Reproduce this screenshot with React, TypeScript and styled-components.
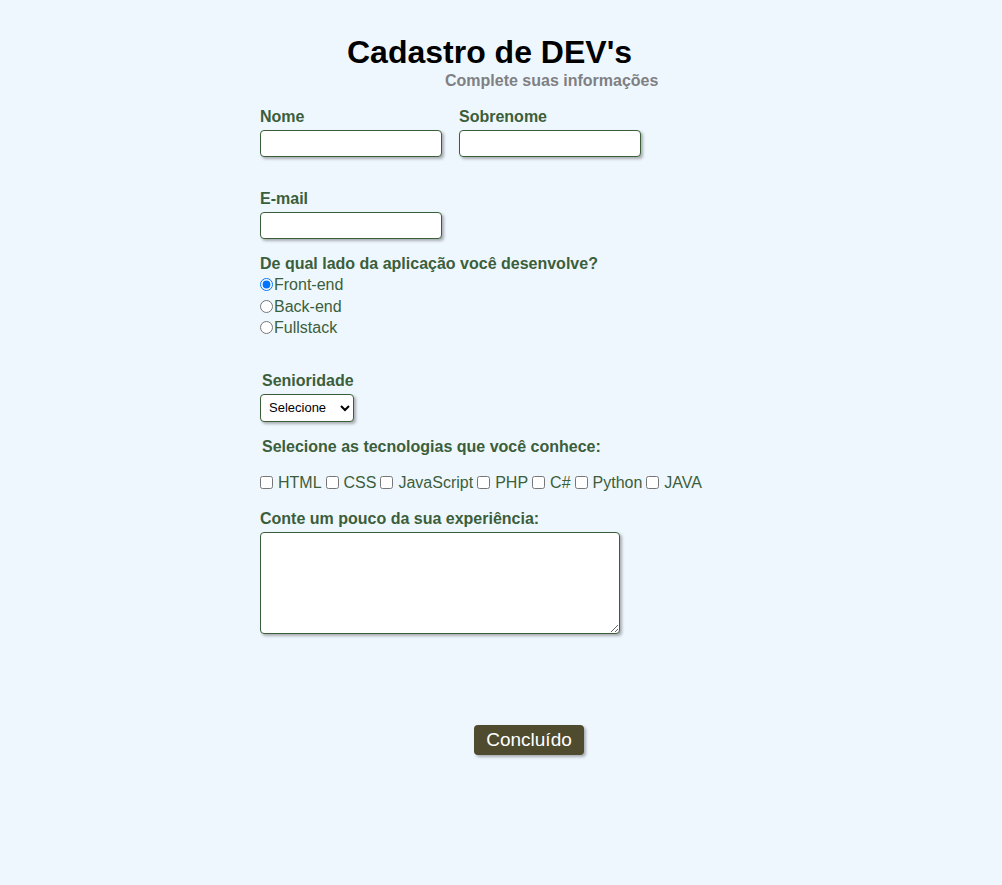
import React from "react";
import styled, { createGlobalStyle } from "styled-components";

const Global = createGlobalStyle`
  html, body { margin: 0; padding: 0; background: #eff7fe; }
  body { font-family: "Liberation Sans", Arial, sans-serif; min-height: 885px; }
`;

const Page = styled.div`
  width: 1002px;
  min-height: 885px;
  background: #eff7fe;
  padding-top: 34px;
  box-sizing: border-box;
`;

const Form = styled.form`
  margin-left: 260px;
  width: 456px;
  display: flex;
  flex-direction: column;
  color: #3b5e3b;
`;

const Header = styled.header`
  display: flex;
  flex-direction: column;
`;

const Title = styled.h1`
  margin: 0;
  font-size: 32px;
  line-height: 37px;
  font-weight: bold;
  color: #000;
  padding-left: 87px;
`;

const Subtitle = styled.p`
  margin: 1px 0 0;
  font-size: 16px;
  line-height: 18px;
  font-weight: bold;
  color: #7f8083;
  padding-left: 185px;
`;

const Row = styled.div<{ $mt: number }>`
  display: flex;
  gap: 17px;
  margin-top: ${(p) => p.$mt}px;
`;

const Field = styled.div`
  display: flex;
  flex-direction: column;
`;

const Label = styled.label`
  font-size: 16px;
  font-weight: bold;
  line-height: 20px;
  margin-bottom: 3px;
  color: #3b5e3b;
`;

const Input = styled.input`
  width: 182px;
  height: 27px;
  box-sizing: border-box;
  border: 1px solid #3b5e3b;
  border-radius: 4px;
  background: #fff;
  box-shadow: 2px 2px 3px rgba(0, 0, 0, 0.3);
  outline: none;
  padding: 0 4px;
`;

const Section = styled.div<{ $mt: number }>`
  display: flex;
  flex-direction: column;
  margin-top: ${(p) => p.$mt}px;
`;

const Question = styled.span<{ $indent?: boolean }>`
  font-size: 16px;
  font-weight: bold;
  line-height: 20px;
  padding-left: ${(p) => (p.$indent ? 2 : 0)}px;
`;

const RadioRow = styled.label`
  display: flex;
  align-items: center;
  font-size: 16px;
  line-height: 21px;
  height: 21.5px;
  color: #3b5e3b;
  input {
    margin: 0 1px 0 0;
    width: 13px;
    height: 13px;
  }
`;

const Select = styled.select`
  width: 94px;
  height: 28px;
  margin-top: 3px;
  border: 1px solid #3b5e3b;
  border-radius: 4px;
  background: #fff;
  box-shadow: 2px 2px 3px rgba(0, 0, 0, 0.3);
  font-family: "Liberation Sans", Arial, sans-serif;
  font-size: 13px;
  color: #000;
  padding: 0 4px;
`;

const CheckRow = styled.div`
  display: flex;
  align-items: center;
  margin-top: 16px;
  font-size: 16px;
  line-height: 20px;
`;

const CheckItem = styled.label`
  display: inline-flex;
  align-items: center;
  margin-right: 4px;
  input {
    margin: 0 5px 0 0;
    width: 13px;
    height: 13px;
  }
`;

const TextArea = styled.textarea`
  width: 360px;
  height: 102px;
  box-sizing: border-box;
  margin-top: 3px;
  border: 1px solid #3b5e3b;
  border-radius: 4px;
  background: #fff;
  box-shadow: 2px 2px 3px rgba(0, 0, 0, 0.3);
  outline: none;
`;

const ButtonWrap = styled.div`
  display: flex;
  margin-top: 91px;
  padding-left: 214px;
`;

const Button = styled.button`
  width: 110px;
  height: 30px;
  border: none;
  border-radius: 4px;
  background: #4f4b2e;
  color: #fff;
  font-family: "Liberation Sans", Arial, sans-serif;
  font-size: 19px;
  box-shadow: 2px 2px 3px rgba(0, 0, 0, 0.3);
  cursor: pointer;
`;

const techs = ["HTML", "CSS", "JavaScript", "PHP", "C#", "Python", "JAVA"];

export default function App() {
  return (
    <Page>
      <Global />
      <Form onSubmit={(e) => e.preventDefault()}>
        <Header>
          <Title>Cadastro de DEV's</Title>
          <Subtitle>Complete suas informações</Subtitle>
        </Header>

        <Row $mt={17}>
          <Field>
            <Label>Nome</Label>
            <Input type="text" />
          </Field>
          <Field>
            <Label>Sobrenome</Label>
            <Input type="text" />
          </Field>
        </Row>

        <Row $mt={32}>
          <Field>
            <Label>E-mail</Label>
            <Input type="email" />
          </Field>
        </Row>

        <Section $mt={15}>
          <Question>De qual lado da aplicação você desenvolve?</Question>
          <RadioRow>
            <input type="radio" name="lado" defaultChecked />
            Front-end
          </RadioRow>
          <RadioRow>
            <input type="radio" name="lado" />
            Back-end
          </RadioRow>
          <RadioRow>
            <input type="radio" name="lado" />
            Fullstack
          </RadioRow>
        </Section>

        <Section $mt={32}>
          <Question $indent>Senioridade</Question>
          <Select defaultValue="">
            <option value="">Selecione</option>
            <option>Júnior</option>
            <option>Pleno</option>
            <option>Sênior</option>
          </Select>
        </Section>

        <Section $mt={15}>
          <Question $indent>Selecione as tecnologias que você conhece:</Question>
          <CheckRow>
            {techs.map((t) => (
              <CheckItem key={t}>
                <input type="checkbox" />
                {t}
              </CheckItem>
            ))}
          </CheckRow>
        </Section>

        <Section $mt={16}>
          <Question>Conte um pouco da sua experiência:</Question>
          <TextArea />
        </Section>

        <ButtonWrap>
          <Button type="submit">Concluído</Button>
        </ButtonWrap>
      </Form>
    </Page>
  );
}
